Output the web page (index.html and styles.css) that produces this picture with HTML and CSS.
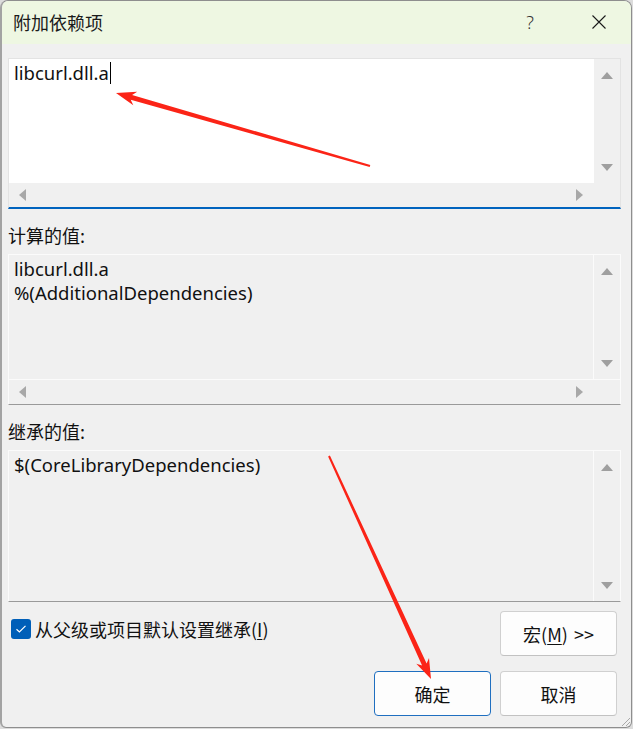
FILE: index.html
```html
<!DOCTYPE html>
<html lang="zh-CN">
<head>
<meta charset="utf-8">
<title>附加依赖项</title>
<link rel="stylesheet" href="styles.css">
</head>
<body>
<div class="dialog">
  <div class="titlebar">
    <div class="title">附加依赖项</div>
    <div class="help">?</div>
    <div class="close">
      <svg width="14" height="14" viewBox="0 0 14 14"><path d="M0.5 0.5 L13.5 13.5 M13.5 0.5 L0.5 13.5" stroke="#1a1a1a" stroke-width="1.1" fill="none"/></svg>
    </div>
  </div>
  <div class="content">
    <div class="box box-edit">
      <div class="box-main">
        <div class="box-text edit-text"><span>libcurl.dll.a</span><span class="caret"></span></div>
        <div class="vscroll">
          <span class="tri tri-up"></span>
          <span class="tri tri-down"></span>
        </div>
      </div>
      <div class="hscroll">
        <div class="hscroll-track">
          <span class="tri tri-left"></span>
          <span class="tri tri-right"></span>
        </div>
        <div class="corner"></div>
      </div>
    </div>

    <div class="label">计算的值:</div>
    <div class="box box-ro">
      <div class="box-main">
        <div class="box-text">libcurl.dll.a<br>%(AdditionalDependencies)</div>
        <div class="vscroll">
          <span class="tri tri-up"></span>
          <span class="tri tri-down"></span>
        </div>
      </div>
      <div class="hscroll">
        <div class="hscroll-track">
          <span class="tri tri-left"></span>
          <span class="tri tri-right"></span>
        </div>
        <div class="corner"></div>
      </div>
    </div>

    <div class="label">继承的值:</div>
    <div class="box box-ro box-tall">
      <div class="box-main">
        <div class="box-text">$(CoreLibraryDependencies)</div>
        <div class="vscroll">
          <span class="tri tri-up"></span>
          <span class="tri tri-down"></span>
        </div>
      </div>
    </div>

    <div class="footer">
      <label class="check">
        <span class="checkbox">
          <svg width="12" height="10" viewBox="0 0 12 10"><path d="M1.5 5.2 L4.4 8 L10.5 1.8" stroke="#fff" stroke-width="1.2" fill="none"/></svg>
        </span>
        <span class="check-label">从父级或项目默认设置继承(<u>I</u>)</span>
      </label>
      <button class="btn btn-macro">宏(<u>M</u>) &gt;&gt;</button>
      <button class="btn btn-ok">确定</button>
      <button class="btn btn-cancel">取消</button>
    </div>
  </div>
  <svg class="grip" width="12" height="12" viewBox="0 0 12 12">
    <path d="M11 3 L3 11 M11 7 L7 11" stroke="#a8a8a8" stroke-width="1" fill="none"/>
  </svg>
</div>
<svg class="annot" width="633" height="729" viewBox="0 0 633 729">
  <polygon fill="#fb2417" points="370.3,165 132.1,95 137.2,91.8 116,93 133.3,105.2 130.7,99.8 369.7,167"/>
  <polygon fill="#fb2417" points="328.1,456.4 422.1,665.5 416.3,663.7 431,679 429,657.9 426.6,663.4 329.9,455.6"/>
</svg>
</body>
</html>
```

FILE: styles.css
```css
* { box-sizing: border-box; }
html, body {
  margin: 0;
  padding: 0;
  background: #dcdcdc;
}
body {
  width: 633px;
  height: 729px;
  position: relative;
  overflow: hidden;
  font-family: "Noto Sans", "Noto Sans CJK SC", sans-serif;
  color: #111;
}
.dialog {
  position: relative;
  width: 632px;
  height: 728px;
  border: 1px solid #8e8e8e;
  border-left: 2px solid #a3a3a3;
  border-radius: 8px 8px 6px 6px;
  background: #f0f0f0;
  overflow: hidden;
  display: flex;
  flex-direction: column;
}
.titlebar {
  height: 43px;
  flex: none;
  background: #eef7e2;
  display: flex;
  align-items: center;
}
.title {
  flex: 1;
  padding-left: 11px;
  font-family: "Noto Sans CJK SC", sans-serif;
  font-size: 18px;
  color: #1a1a1a;
  padding-bottom: 1px;
}
.help {
  width: 20px;
  margin-right: 52px;
  font-family: "Noto Sans", sans-serif;
  font-size: 18px;
  font-weight: 300;
  color: #333;
  text-align: center;
  padding-bottom: 2px;
}
.close {
  width: 14px;
  height: 14px;
  margin-right: 25px;
  display: flex;
  margin-bottom: 1px;
}
.content {
  flex: 1;
  padding: 14px 10px 0 6px;
  display: flex;
  flex-direction: column;
}
.box {
  height: 151px;
  display: flex;
  flex-direction: column;
  flex: none;
}
.box-edit {
  border: 1px solid #e3e3e3;
  border-bottom: 2px solid #0063be;
  background: #f0f0f0;
}
.box-ro {
  border: 1px solid #fbfbfb;
  border-bottom: 1px solid #9a9a9a;
  background: #f0f0f0;
}
.box-tall { height: 152px; }
.box-main {
  flex: 1;
  display: flex;
  min-height: 0;
}
.box-text {
  flex: 1;
  padding: 2px 5px;
  font-size: 18.5px;
  line-height: 24px;
  color: #111;
  white-space: nowrap;
}
.edit-text {
  background: #ffffff;
  display: flex;
  align-items: flex-start;
}
.caret {
  display: inline-block;
  width: 1px;
  height: 22px;
  margin-top: 1px;
  margin-left: 1px;
  background: #000;
}
.box-ro .box-text {
  border-right: 1px solid #fbfbfb;
}
.vscroll {
  width: 26px;
  flex: none;
  display: flex;
  flex-direction: column;
  justify-content: space-between;
  align-items: center;
  padding: 13px 0 12px;
}
.hscroll {
  height: 24px;
  flex: none;
  display: flex;
}
.box-ro .hscroll { border-top: 1px solid #fbfbfb; height: 25px; }
.hscroll-track {
  flex: 1;
  display: flex;
  justify-content: space-between;
  align-items: center;
  padding: 0 11px 0 10px;
}
.corner { width: 26px; }
.tri {
  width: 0;
  height: 0;
  display: block;
}
.tri-up {
  border-left: 6px solid transparent;
  border-right: 6px solid transparent;
  border-bottom: 7px solid #9f9f9f;
}
.tri-down {
  border-left: 6px solid transparent;
  border-right: 6px solid transparent;
  border-top: 7px solid #9f9f9f;
}
.tri-left {
  border-top: 6px solid transparent;
  border-bottom: 6px solid transparent;
  border-right: 7px solid #a8a8a8;
}
.tri-right {
  border-top: 6px solid transparent;
  border-bottom: 6px solid transparent;
  border-left: 7px solid #a8a8a8;
}
.label {
  flex: none;
  height: 45px;
  padding-top: 14px;
  padding-left: 0;
  font-family: "Noto Sans CJK SC", sans-serif;
  font-size: 18px;
  line-height: 24px;
  color: #111;
}
.footer {
  flex: 1;
  display: grid;
  grid-template-columns: 1fr 117px 117px;
  grid-template-rows: 45px 45px;
  column-gap: 9px;
  row-gap: 15px;
  padding: 9px 4px 0 0;
  align-content: start;
}
.check {
  grid-column: 1 / 3;
  grid-row: 1;
  display: flex;
  align-items: center;
  padding-left: 3px;
  padding-bottom: 10px;
}
.checkbox {
  width: 20px;
  height: 20px;
  border-radius: 3px;
  background: #005fb8;
  display: flex;
  align-items: center;
  justify-content: center;
  flex: none;
}
.check-label {
  margin-left: 4px;
  font-family: "Noto Sans CJK SC", sans-serif;
  font-size: 18px;
  color: #111;
}
.check-label u, .btn u { text-underline-offset: 2px; }
.btn {
  height: 45px;
  border: 1px solid #d0d0d0;
  border-bottom-color: #c2c2c2;
  border-radius: 4px;
  background: #fdfdfd;
  font-family: "Noto Sans CJK SC", sans-serif;
  font-size: 18px;
  color: #111;
  padding: 0;
  margin: 0;
}
.btn-macro { grid-column: 3; grid-row: 1; word-spacing: 2px; }
.btn-ok { grid-column: 2; grid-row: 2; border-color: #1f6fc0; }
.btn-cancel { grid-column: 3; grid-row: 2; }
.grip {
  position: absolute;
  right: 0;
  bottom: 0;
}
.annot {
  position: absolute;
  left: 0;
  top: 0;
  pointer-events: none;
}
```
